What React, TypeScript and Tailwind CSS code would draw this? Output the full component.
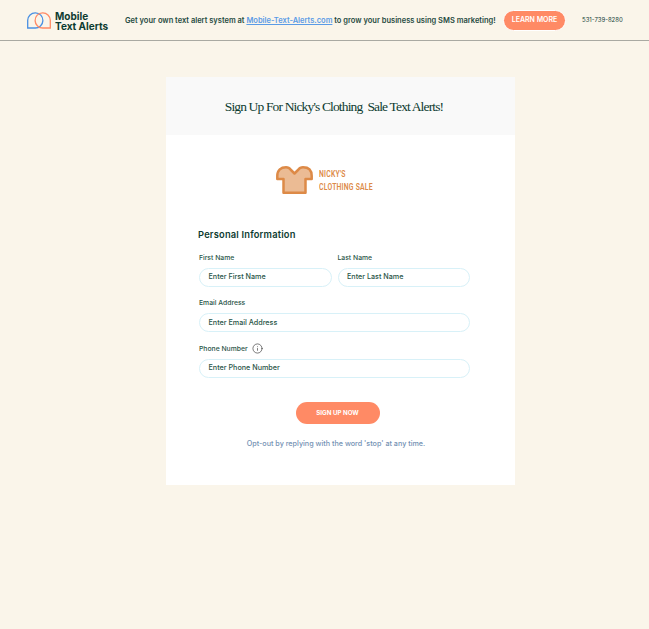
import { Info } from "lucide-react";

const sans = "font-['Inter','Noto_Sans',sans-serif]";

function Field({ label, placeholder, info = false }: { label: string; placeholder: string; info?: boolean }) {
  return (
    <div className="flex flex-col flex-1 min-w-0">
      <div className="flex items-center gap-[4px] h-[14px] mb-[3px] text-[6.8px] font-medium text-[#2a5548]">
        {label}
        {info && <Info size={11} strokeWidth={1.4} className="text-[#333]" />}
      </div>
      <div className="h-[19px] rounded-full border-[1.5px] border-[#d8f1f8] bg-white flex items-center px-[8.5px] text-[7.2px] font-medium text-[#2a5548]">
        {placeholder}
      </div>
    </div>
  );
}

export default function App() {
  return (
    <div className={`min-h-[629px] bg-[#faf5ea] ${sans}`}>
      <header className="h-[41px] pt-[1px] border-b border-[#a9a9a2] flex items-center">
        <div className="ml-[27px] w-[98px] flex items-center gap-[4px] shrink-0">
          <svg width="24" height="17" viewBox="0 0 24 17" fill="none">
            <path d="M8 16H0.7V8.300A7.600 7.600 0 1 1 8 16z" stroke="#4a90e2" strokeWidth="1.300" />
            <path d="M16 16H23.300V8.300A7.600 7.600 0 1 0 16 16z" stroke="#ff8a65" strokeWidth="1.300" />
          </svg>
          <div className="text-[10px] leading-[10px] font-bold text-[#0d3b30] whitespace-nowrap">
            Mobile
            <br />
            Text Alerts
          </div>
        </div>
        <div className="text-[7.5px] font-semibold text-[#1f4a3f] whitespace-nowrap w-[378px] shrink-0">
          Get your own text alert system at{" "}
          <span className="text-[#5a9be6] underline">Mobile-Text-Alerts.com</span> to grow your business using SMS marketing!
        </div>
        <div className="w-[63px] h-[21px] rounded-full bg-[#ff8a65] border border-white flex items-center justify-center text-[7px] font-semibold text-white shrink-0">
          LEARN MORE
        </div>
        <div className="ml-[16px] text-[6px] text-[#17443a] mb-[3px]">531-739-8280</div>
      </header>

      <main className="pl-[166px] pt-[36px]">
        <div className="w-[349px] h-[408px] bg-white flex flex-col">
          <div className="h-[58px] pt-[2px] pr-[13px] bg-[#f9f9f9] flex items-center justify-center font-['Liberation_Serif',serif] text-[13.5px] tracking-[-0.85px] text-[#0d3b30] whitespace-nowrap">
            Sign Up For Nicky's Clothing&nbsp; Sale Text Alerts!
          </div>

          <div className="flex items-center gap-[5px] mt-[31px] ml-[110px]">
            <svg width="38" height="28" viewBox="0 0 38 28" className="shrink-0">
              <path
                d="M1.300 13V10C1.300 4 5 1.300 10 1.300C12 1.300 13.500 2 15 4L18.500 7.500L22 4C23.500 2 25 1.300 27 1.300C32 1.300 35.700 4 35.700 10V13H29.500V26.700H7.500V13z"
                fill="#ebbb94"
                stroke="#dd8a47"
                strokeWidth="2.500"
                strokeLinejoin="round"
              />
            </svg>
            <div className="origin-left scale-x-[0.72] text-[9.500px] leading-[13px] font-semibold tracking-[0.3px] text-[#dd8a47] font-['Roboto',sans-serif] whitespace-nowrap">
              NICKY'S
              <br />
              CLOTHING SALE
            </div>
          </div>

          <div className="mt-[34px] ml-[32px] text-[9.300px] font-semibold text-[#0d3b30] tracking-[0.2px]">Personal Information</div>

          <div className="ml-[33px] w-[271px] mt-[9px] flex flex-col gap-[9.500px]">
            <div className="flex gap-[6px]">
              <Field label="First Name" placeholder="Enter First Name" />
              <Field label="Last Name" placeholder="Enter Last Name" />
            </div>
            <Field label="Email Address" placeholder="Enter Email Address" />
            <Field label="Phone Number" placeholder="Enter Phone Number" info />
          </div>

          <div className="flex justify-center mt-[24px] pr-[6px]">
            <div className="w-[84px] h-[22px] rounded-full bg-[#ff8a65] flex items-center justify-center text-[6.200px] font-bold text-white">
              SIGN UP NOW
            </div>
          </div>

          <div className="mt-[15px] pr-[9px] text-center text-[7.200px] font-medium text-[#7391b3]">
            Opt-out by replying with the word 'stop' at any time.
          </div>
        </div>
      </main>
    </div>
  );
}
